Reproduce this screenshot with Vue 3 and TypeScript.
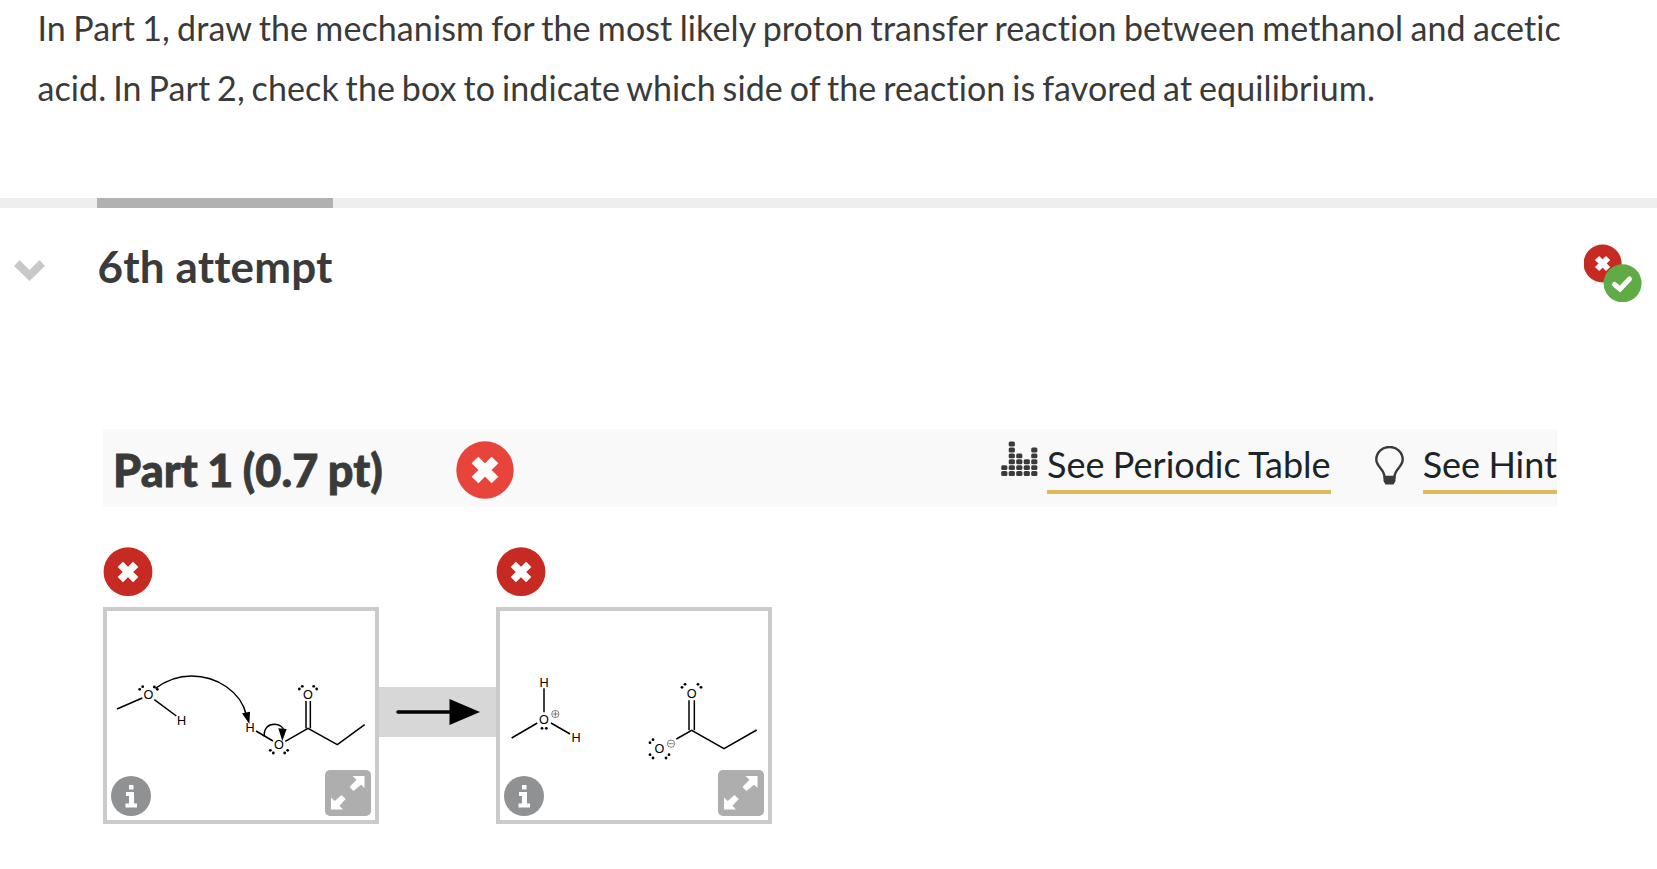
<script setup lang="ts">
interface Atom {
    x: number;
    y: number;
    label: string;
}

interface Sketch {
    viewBox: string;
    bonds: string;
    atoms: Atom[];
    dots: number[][];
    curves: string[];
    heads: string[];
    charges: { x: number; y: number; plus: boolean }[];
}

const reactants: Sketch = {
    viewBox: '36 33 804 627',
    bonds: 'M66 327L142 294M178 299L244 348M483 393L534 423M571 424L639 385L727 434L809 374M633 385V303M646 385V303',
    atoms: [
        { x: 160, y: 285, label: 'O' },
        { x: 260, y: 361, label: 'H' },
        { x: 465, y: 384, label: 'H' },
        { x: 552, y: 434, label: 'O' },
        { x: 639, y: 285, label: 'O' },
    ],
    dots: [
        [134, 268], [143, 260], [178, 261], [187, 268],
        [613, 267], [622, 259], [656, 259], [665, 267],
        [526, 451], [535, 459], [569, 459], [578, 451],
    ],
    curves: [
        'M181 265C215 240 250 228 290 228C365 228 438 275 454 345',
        'M508 409C506 385 520 373 538 373C555 373 565 382 566 392',
    ],
    heads: ['M441 340L465 335L463 372Z', 'M550 385L575 387L562 423Z'],
    charges: [],
};

const products: Sketch = {
    viewBox: '390 33 804 627',
    bonds: 'M522 265V337M502 369L425 414M543 369L600 402M919 417L965 391L1062 446L1160 390M957 391V301M973 391V301',
    atoms: [
        { x: 522, y: 247, label: 'H' },
        { x: 522, y: 358, label: 'O' },
        { x: 618, y: 414, label: 'H' },
        { x: 965, y: 281, label: 'O' },
        { x: 868, y: 447, label: 'O' },
    ],
    dots: [
        [516, 385], [529, 385],
        [936, 262], [945, 253], [984, 253], [993, 262],
        [840, 428], [849, 419], [840, 464], [849, 474], [888, 474], [897, 464],
    ],
    curves: [],
    heads: [],
    charges: [{ x: 556, y: 342, plus: true }, { x: 903, y: 431, plus: false }],
};

const sketches: Sketch[] = [reactants, products];
const columns = [2, 6, 4, 3, 5];
</script>

<template>
    <div class="page">
        <p class="prompt">
            <span class="prompt__intro">In Part 1, draw the mechanism for the most likely proton transfer reaction between methanol and acetic</span><br>
            acid. In Part 2, check the box to indicate which side of the reaction is favored at equilibrium.
        </p>

        <div class="tabs"><div class="tabs__active"></div></div>

        <div class="attempt">
            <svg class="attempt__chevron" viewBox="0 0 31 21">
                <path d="M0 6L5.5 0L15.5 10L25.5 0L31 6L15.5 21Z" fill="#c8c8c8" />
            </svg>
            <h2 class="attempt__title">6th attempt</h2>
            <svg class="attempt__status" viewBox="0 0 58 58">
                <circle cx="18.6" cy="19.5" r="19" fill="#c62a22" />
                <path d="M13.1 14L24.1 25M24.1 14L13.1 25" stroke="#fff" stroke-width="6" />
                <circle cx="38.6" cy="39.3" r="19" fill="#60ab46" />
                <path d="M30.5 40.5L36 45L45.5 35" fill="none" stroke="#fff" stroke-width="5" stroke-linecap="round" />
            </svg>
        </div>

        <div class="part">
            <h3 class="part__title">Part 1 (0.7 pt)</h3>
            <svg class="part__status" viewBox="0 0 58 58">
                <circle cx="29" cy="29" r="28.7" fill="#e8443c" />
                <path d="M19 19L39 39M39 19L19 39" stroke="#fff" stroke-width="9.5" />
            </svg>
            <svg class="part__table-icon" viewBox="0 0 37 36">
                <g v-for="(count, col) in columns" :key="col">
                    <rect
                        v-for="row in count"
                        :key="row"
                        :x="col * 7.5 + 0.2"
                        :y="36 - row * 5.9"
                        width="6.2"
                        height="4.9"
                        rx="1.5"
                        fill="#3a3a3a"
                    />
                </g>
            </svg>
            <a class="part__link">See Periodic Table</a>
            <svg class="part__hint-icon" viewBox="0 0 29 39">
                <path d="M9.5 31C9.5 23 1.3 21 1.3 13.5A13.1 12.4 0 0 1 27.7 13.5C27.7 21 19.5 23 19.5 31Z" fill="none" stroke="#3a3a3a" stroke-width="2.4" />
                <path d="M8.5 31H20.5V35L18.5 38.5H10.5L8.5 35Z" fill="#3a3a3a" />
            </svg>
            <a class="part__link">See Hint</a>
        </div>

        <div class="scheme">
            <template v-for="(s, i) in sketches" :key="i">
                <div v-if="i > 0" class="arrow">
                    <svg class="arrow__icon" viewBox="0 0 84 28">
                        <path d="M2 14H56" stroke="#000" stroke-width="3.6" stroke-linecap="round" />
                        <path d="M53.5 1L84 14L53.5 27Z" />
                    </svg>
                </div>
                <div class="step">
                    <svg class="step__status" viewBox="0 0 50 50">
                        <circle cx="25" cy="24.7" r="24.4" fill="#c62a22" />
                        <path d="M17.3 17.3L32.7 32.7M32.7 17.3L17.3 32.7" stroke="#fff" stroke-width="7.4" />
                    </svg>
                    <div class="box">
                        <svg class="box__sketch" :viewBox="s.viewBox">
                            <path class="bond" :d="s.bonds" />
                            <path v-for="c in s.curves" :key="c" class="bond" :d="c" />
                            <path v-for="h in s.heads" :key="h" :d="h" />
                            <circle v-for="(d, n) in s.dots" :key="n" :cx="d[0]" :cy="d[1]" r="4.2" />
                            <text v-for="(a, n) in s.atoms" :key="n" class="atom" :x="a.x" :y="a.y + 13">{{ a.label }}</text>
                            <g v-for="c in s.charges" :key="c.x" class="charge">
                                <circle :cx="c.x" :cy="c.y" r="11" />
                                <path :d="`M${c.x - 8} ${c.y}h16`" />
                                <path v-if="c.plus" :d="`M${c.x} ${c.y - 8}v16`" />
                            </g>
                        </svg>
                        <svg class="box__info" viewBox="0 0 40 40">
                            <circle cx="20" cy="20" r="20" fill="#8f9193" />
                            <path d="M18 9H22.5V13.5H18ZM15 16H23V27.5H26V31.5H14.5V27.5H18V20H15Z" fill="#fff" />
                        </svg>
                        <svg class="box__expand" viewBox="0 0 46 46">
                            <rect width="46" height="46" rx="5" fill="#aeaeae" />
                            <path d="M27.5 6H39.5V18L36 14.8L28.5 21L24.5 17L31.5 9.8ZM6 27.5V39.5H18L14.5 35.8L20.7 29L16.5 25L9.8 31Z" fill="#fff" />
                        </svg>
                    </div>
                </div>
            </template>
        </div>
    </div>
</template>

<style>
body {
    margin: 0;
    background: #fff;
}
</style>

<style scoped>
.page {
    height: 869px;
    overflow: hidden;
    color: #3a3a3a;
    font-family: Lato, sans-serif;
    font-variant-ligatures: none;
}

svg {
    display: block;
    flex: none;
}

.prompt {
    box-sizing: border-box;
    height: 198px;
    margin: 0;
    padding-left: 37.5px;
    font-size: 34px;
    line-height: 60px;
    letter-spacing: 0.1px;
    word-spacing: -1.95px;
    white-space: nowrap;
    transform: translateY(-2px);
}

.prompt__intro {
    word-spacing: -1.55px;
}

.tabs {
    height: 10px;
    padding-left: 97px;
    background: #eee;
}

.tabs__active {
    width: 236px;
    height: 10px;
    background: #b1b1b1;
}

.attempt {
    display: flex;
    height: 221px;
    padding: 0 15px 0 14px;
}

.attempt__chevron {
    width: 31px;
    height: 21px;
    margin-top: 52px;
}

.attempt__title {
    margin: 28px auto 0 52.5px;
    font-size: 44px;
    font-weight: 700;
    line-height: 60px;
    letter-spacing: 0.15px;
}

.attempt__status {
    width: 58px;
    height: 58px;
    margin-top: 36px;
}

.part {
    display: flex;
    width: 1444px;
    height: 78px;
    margin-left: 103px;
    padding-left: 10px;
    background: #f9f9f9;
}

.part__title {
    width: 343px;
    margin: 11px 0 0;
    font-size: 45px;
    font-weight: 900;
    line-height: 60px;
    letter-spacing: 0.1px;
    word-spacing: -1.5px;
    white-space: nowrap;
    -webkit-text-stroke: 0.8px #3a3a3a;
}

.part__status {
    width: 58px;
    height: 58px;
    margin: 12px auto 0 0;
}

.part__table-icon {
    width: 37px;
    height: 36px;
    margin: 12px 9px 0 0;
}

.part__link {
    height: 51px;
    margin-top: 10px;
    border-bottom: 4px solid #dcb95b;
    color: #1d2427;
    font-size: 36px;
    line-height: 50px;
    word-spacing: -0.9px;
    white-space: nowrap;
}

.part__hint-icon {
    width: 29px;
    height: 39px;
    margin: 17px 19px 0 44px;
}

.scheme {
    display: flex;
    align-items: flex-start;
    padding: 40px 0 0 103px;
}

.step__status {
    width: 50px;
    height: 50px;
}

.box {
    position: relative;
    width: 268px;
    height: 209px;
    margin-top: 10px;
    border: 4px solid #cbcbcb;
}

.box__sketch {
    width: 268px;
    height: 209px;
}

.box__info {
    position: absolute;
    left: 4px;
    bottom: 4px;
    width: 40px;
    height: 40px;
}

.box__expand {
    position: absolute;
    right: 4px;
    bottom: 4px;
    width: 46px;
    height: 46px;
}

.bond {
    fill: none;
    stroke: #000;
    stroke-width: 4.5;
}

.atom {
    fill: #000;
    font-family: "Liberation Sans", sans-serif;
    font-size: 38px;
    text-anchor: middle;
}

.charge {
    fill: none;
    stroke: #444;
    stroke-width: 2;
}

.arrow {
    display: flex;
    align-items: center;
    justify-content: center;
    width: 117px;
    height: 50px;
    margin-top: 140px;
    background: #d7d7d7;
}

.arrow__icon {
    width: 84px;
    height: 28px;
}
</style>
